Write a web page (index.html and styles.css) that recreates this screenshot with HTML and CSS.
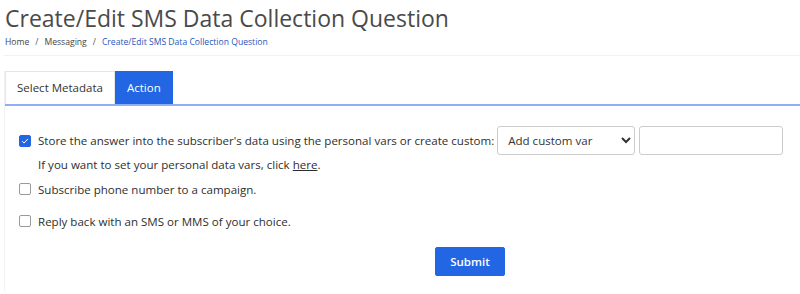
FILE: index.html
```html
<!DOCTYPE html>
<html lang="en">
<head>
  <meta charset="UTF-8">
  <title>Create/Edit SMS Data Collection Question</title>
  <link rel="stylesheet" href="styles.css">
</head>
<body>
  <div class="page-header">
    <h1>Create/Edit SMS Data Collection Question</h1>
    <ol class="breadcrumb">
      <li><a href="#">Home</a></li>
      <li><a href="#">Messaging</a></li>
      <li class="active">Create/Edit SMS Data Collection Question</li>
    </ol>
  </div>

  <div class="panel">
    <ul class="tabs">
      <li class="tab">Select Metadata</li>
      <li class="tab active">Action</li>
    </ul>

    <form class="tab-body">
      <div class="option first">
        <label class="check-row">
          <input type="checkbox" class="box checked">
          <span>Store the answer into the subscriber's data using the personal vars or create custom:</span>
        </label>
        <select class="field select">
          <option>Add custom var</option>
        </select>
        <input type="text" class="field text">
      </div>
      <p class="hint">If you want to set your personal data vars, click <a href="#">here</a>.</p>

      <div class="option">
        <label class="check-row">
          <input type="checkbox" class="box">
          <span>Subscribe phone number to a campaign.</span>
        </label>
      </div>

      <div class="option">
        <label class="check-row">
          <input type="checkbox" class="box">
          <span>Reply back with an SMS or MMS of your choice.</span>
        </label>
      </div>

      <div class="actions">
        <button type="button" class="button">Submit</button>
      </div>
    </form>
  </div>
</body>
</html>
```

FILE: styles.css
```css
body {
  font-family: 'Open Sans', 'Noto Sans', sans-serif;
  margin: 0;
  padding: 0 0 0 4px;
  color: #333;
  background-color: #fff;
  font-size: 11.5px;
}
.page-header {
  padding: 0 0 0 1px;
  border-bottom: 1px solid #f2f2f2;
  margin-bottom: 15px;
}
h1 {
  margin: 0;
  padding-top: 1px;
  font-size: 23px;
  font-weight: 400;
  line-height: 34px;
  color: #4a4a4a;
}
.breadcrumb {
  list-style: none;
  margin: 0;
  padding: 0 0 6px 0;
  display: flex;
  font-size: 8.6px;
  line-height: 14px;
}
.breadcrumb li + li::before {
  content: "/";
  padding: 0 6px;
  color: #555;
}
.breadcrumb a {
  color: #444;
  text-decoration: none;
}
.breadcrumb .active {
  color: #2757b8;
}
.panel {
  border-left: 1px solid #f1f1f6;
  border-bottom-left-radius: 4px;
  min-height: 222px;
}
.tabs {
  list-style: none;
  margin: 0;
  padding: 0;
  display: flex;
  border-bottom: 2px solid #8db0f3;
}
.tab {
  padding: 0 11px;
  line-height: 32px;
  font-size: 11.5px;
  color: #333;
  border: 1px solid #e6e6e6;
  border-bottom: none;
  background: #fff;
}
.tab.active {
  background-color: #2266e3;
  border-color: #2266e3;
  color: #fff;
}
.tab-body {
  padding: 20px 0 0 13px;
}
.option {
  display: flex;
  align-items: center;
  min-height: 20px;
  margin-bottom: 12px;
}
.option.first {
  min-height: 28px;
  margin-bottom: 0;
}
.check-row {
  display: flex;
  align-items: center;
  white-space: nowrap;
  font-size: 11.55px;
  color: #2e2e2e;
}
.box {
  appearance: none;
  width: 12px;
  height: 12px;
  margin: 0 7px 0 1px;
  border: 1px solid #9a9a9a;
  border-radius: 2px;
  background: #fff;
}
.box.checked {
  border-color: #2266e3;
  background: #2266e3 url("data:image/svg+xml,%3Csvg xmlns='http://www.w3.org/2000/svg' viewBox='0 0 12 12'%3E%3Cpath d='M2.5 6.2l2.3 2.3 4.7-5' fill='none' stroke='%23fff' stroke-width='1.2'/%3E%3C/svg%3E") center/10px no-repeat;
}
.field {
  height: 29px;
  box-sizing: border-box;
  border: 1px solid #ccc;
  border-radius: 3px;
  font-family: inherit;
  font-size: 11.55px;
  color: #333;
  background: #fff;
}
.select {
  width: 138px;
  margin-left: 3px;
  padding: 0 6px;
}
.text {
  width: 144px;
  margin-left: 4px;
}
.hint {
  margin: 0 0 4px 20px;
  font-size: 11.55px;
  line-height: 20px;
  color: #2e2e2e;
}
.hint a {
  color: #2e2e2e;
}
.actions {
  display: flex;
  padding-top: 4px;
  padding-left: 417px;
}
.button {
  background-color: #2266e3;
  color: #fff;
  border: 1px solid #2266e3;
  border-radius: 2px;
  font-family: inherit;
  font-size: 11.5px;
  font-weight: 600;
  width: 70px;
  height: 29px;
}
```
